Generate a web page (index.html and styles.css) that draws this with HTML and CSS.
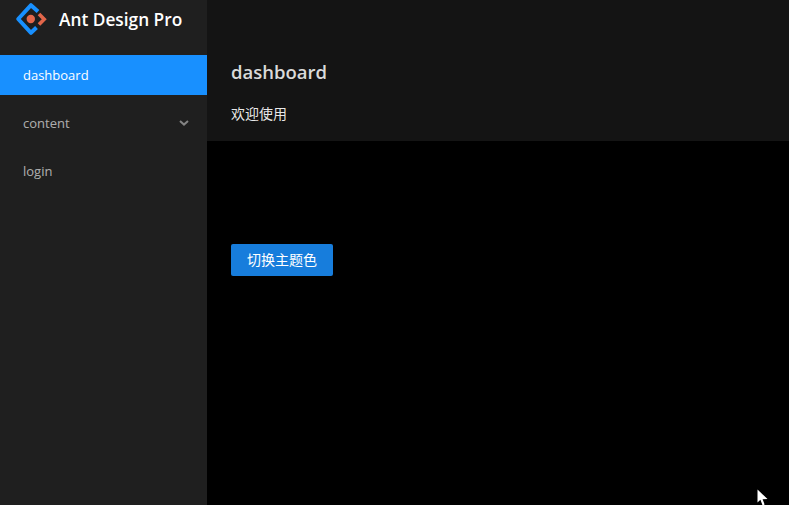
FILE: index.html
```html
<!DOCTYPE html>
<html lang="zh">
<head>
<meta charset="utf-8">
<title>Ant Design Pro</title>
<link rel="stylesheet" href="styles.css">
</head>
<body>
<div class="layout">
  <aside class="sider">
    <div class="brand">
      <svg class="logo" viewBox="0 0 32 34" width="32" height="34" aria-hidden="true">
        <path d="M23 9.5 L16 3.2 L3.2 17 L16 30.8 L21.5 25.5" fill="none" stroke="#1890ff" stroke-width="4" stroke-linejoin="round"/>
        <path d="M24 12 L29.2 17.2 L24 22.4" fill="none" stroke="#e2664a" stroke-width="3.6"/>
        <circle cx="15.8" cy="17" r="4.2" fill="#e2664a"/>
      </svg>
      <span class="brand-name">Ant Design Pro</span>
    </div>
    <nav class="menu">
      <a class="menu-item active">dashboard</a>
      <a class="menu-item">content
        <svg class="caret" viewBox="0 0 10 6" width="10" height="6" aria-hidden="true"><path d="M1 1 L5 4.6 L9 1" fill="none" stroke="currentColor" stroke-width="2"/></svg>
      </a>
      <a class="menu-item">login</a>
    </nav>
  </aside>
  <main class="main">
    <header class="page-header">
      <h1 class="page-title">dashboard</h1>
      <p class="page-desc">欢迎使用</p>
    </header>
    <section class="content">
      <button class="btn" type="button">切换主题色</button>
    </section>
  </main>
</div>
<svg class="cursor" viewBox="0 0 12 17" width="12" height="17" aria-hidden="true">
  <path d="M0.5 0.5 L0.5 13.5 L3.4 10.8 L5.6 16.5 L7.6 15.6 L5.6 10.2 L10.5 10 Z" fill="#fff"/>
</svg>
</body>
</html>
```

FILE: styles.css
```css
* { box-sizing: border-box; }
html, body { margin: 0; height: 100%; }
body {
  background: #000;
  overflow: hidden;
  font-family: "Open Sans", "Noto Sans CJK SC", sans-serif;
  font-size: 14px;
  color: rgba(255, 255, 255, 0.85);
}
.layout { display: flex; height: 505px; }
.sider { width: 207px; flex: none; background: #1f1f1f; }
.brand { display: flex; align-items: center; gap: 12px; height: 55px; padding: 0 0 16px 15px; }
.logo { flex: none; margin-top: -1px; }
.brand-name { font-size: 17.3px; font-weight: 600; color: #fff; white-space: nowrap; }
.menu { display: flex; flex-direction: column; gap: 8px; }
.menu-item {
  display: flex; align-items: center; justify-content: space-between;
  height: 40px; padding: 0 18px 1px 23px;
  color: rgba(255, 255, 255, 0.65);
  font-size: 13px;
}
.menu-item.active { background: #1890ff; color: #fff; }
.caret { color: rgba(255, 255, 255, 0.45); }
.main { flex: 1; min-width: 0; display: flex; flex-direction: column; }
.page-header { height: 141px; background: #141414; padding: 57px 24px 0; }
.page-title { margin: 0; font-size: 18.5px; line-height: 30px; font-weight: 600; color: rgba(255, 255, 255, 0.85); }
.page-desc { margin: 16px 0 0; font-size: 14px; line-height: 22px; color: rgba(255, 255, 255, 0.92); }
.content { padding: 103px 24px 0; }
.btn {
  display: block; width: 102px; height: 32px; padding: 0 0 2px;
  border: 0; border-radius: 2px; background: #177ddc; color: #fff;
  font: inherit; text-align: center;
}
.cursor { position: absolute; left: 757px; top: 489px; }
```
